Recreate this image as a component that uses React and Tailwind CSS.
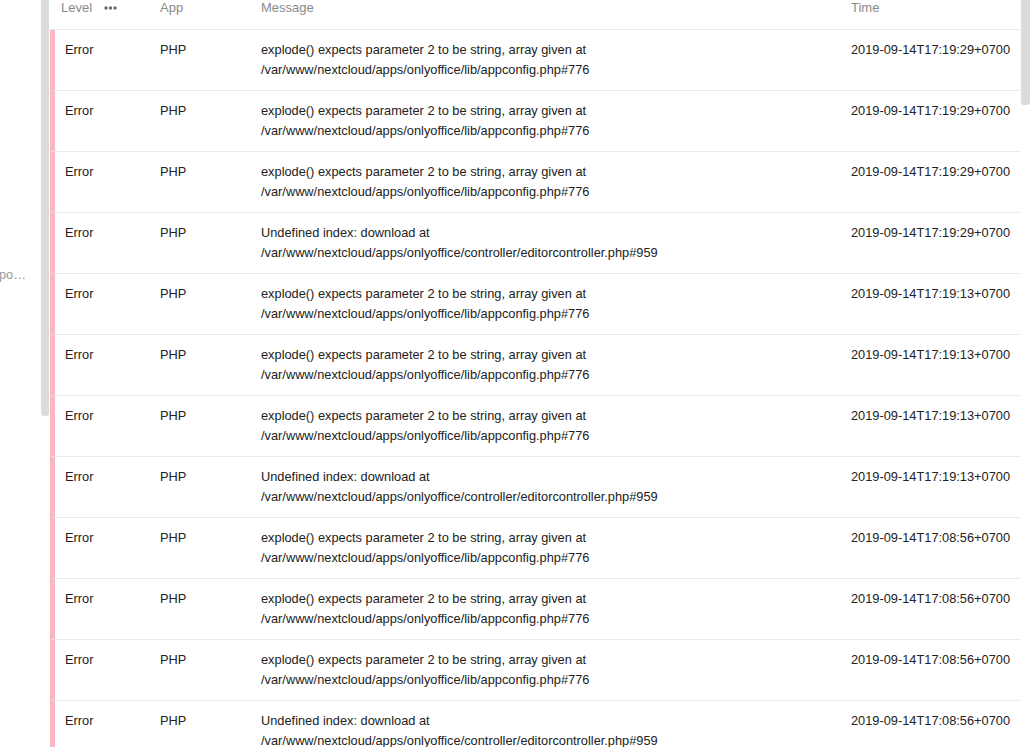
const explodeMsg = ['explode() expects parameter 2 to be string, array given at', '/var/www/nextcloud/apps/onlyoffice/lib/appconfig.php#776']
const undefMsg = ['Undefined index: download at', '/var/www/nextcloud/apps/onlyoffice/controller/editorcontroller.php#959']

const times = ['2019-09-14T17:19:29+0700', '2019-09-14T17:19:13+0700', '2019-09-14T17:08:56+0700']

// three explode() entries followed by one undefined index, per timestamp
const rows = times.flatMap((t) => [
  { msg: explodeMsg, time: t },
  { msg: explodeMsg, time: t },
  { msg: explodeMsg, time: t },
  { msg: undefMsg, time: t },
])

function Dots() {
  return (
    <svg width="13" height="4" viewBox="0 0 13 4" className="ml-[12px] mt-[6px]">
      <circle cx="2" cy="2" r="1.7" fill="#6b6b6b" />
      <circle cx="6.5" cy="2" r="1.7" fill="#6b6b6b" />
      <circle cx="11" cy="2" r="1.7" fill="#6b6b6b" />
    </svg>
  )
}

export default function App() {
  return (
    <div
      className="w-[1030px] h-[747px] overflow-hidden bg-white flex text-[12.8px] text-[#222]"
      style={{ fontFamily: '"Liberation Sans", Arial, sans-serif' }}
    >
      {/* sidebar + its scrollbar */}
      <div className="w-[50px] flex shrink-0">
        <div className="w-[41px] overflow-hidden">
          <div className="pt-[265px] -ml-[1px] leading-[20px] text-[#9a9a9a] whitespace-nowrap">po…</div>
        </div>
        <div className="w-[8px] h-[416px] bg-[#dbdbdb] rounded-b-[3px]" />
      </div>

      {/* log table */}
      <div className="flex-1 min-w-0">
        <div className="grid grid-cols-[110px_101px_590px_1fr] h-[30px] border-b border-[#ebebeb] text-[#8a8a8a] leading-[16px] text-[13px]">
          <div className="pl-[11px] flex items-start">
            <span>Level</span>
            <Dots />
          </div>
          <div>App</div>
          <div>Message</div>
          <div>Time</div>
        </div>
        {rows.map((r, i) => (
          <div
            key={i}
            className="grid grid-cols-[105px_101px_590px_1fr] border-l-[5px] border-l-[#fbb8c0] border-b border-b-[#ebebeb] py-[10px] leading-[20px]"
          >
            <div className="pl-[10px]">Error</div>
            <div>PHP</div>
            <div>
              <div>{r.msg[0]}</div>
              <div>{r.msg[1]}</div>
            </div>
            <div>{r.time}</div>
          </div>
        ))}
      </div>

      {/* page scrollbar */}
      <div className="w-[10px] shrink-0 pl-[1px]">
        <div className="h-[105px] bg-[#dbdbdb] rounded-b-[3px]" />
      </div>
    </div>
  )
}
